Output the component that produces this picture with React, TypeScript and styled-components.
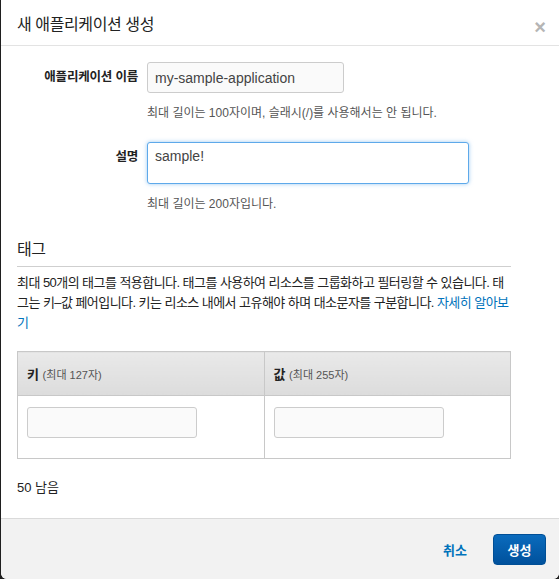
import React from 'react';
import styled, { createGlobalStyle } from 'styled-components';

const GlobalStyle = createGlobalStyle`
  html, body {
    margin: 0;
    padding: 0;
    background: #1f1f1f;
  }
  body {
    font-family: 'Liberation Sans', 'Noto Sans CJK KR', sans-serif;
    font-feature-settings: 'palt';
    color: #222;
  }
  * {
    box-sizing: border-box;
  }
`;

const tags = [
  { key: '키', limit: '(최대 127자)' },
  { key: '값', limit: '(최대 255자)' },
];

export default function App() {
  return (
    <>
      <GlobalStyle />
      <Modal>
        <Header>
          <Title>새 애플리케이션 생성</Title>
          <Close type="button" aria-label="close">
            ×
          </Close>
        </Header>

        <Body>
          <FormRow>
            <Label>애플리케이션 이름</Label>
            <Field>
              <TextInput defaultValue="my-sample-application" width={197} />
              <Help>최대 길이는 100자이며, 슬래시(/)를 사용해서는 안 됩니다.</Help>
            </Field>
          </FormRow>

          <FormRow>
            <Label>설명</Label>
            <Field>
              <TextArea defaultValue="sample!" />
              <Help>최대 길이는 200자입니다.</Help>
            </Field>
          </FormRow>

          <Section>
            <SectionTitle>태그</SectionTitle>
            <Rule />
            <Paragraph>
              최대 50개의 태그를 적용합니다. 태그를 사용하여 리소스를 그룹화하고 필터링할 수
              있습니다. 태그는 키–값 페어입니다. 키는 리소스 내에서 고유해야 하며 대소문자를
              구분합니다. <Link href="#">자세히 알아보기</Link>
            </Paragraph>

            <TagTable>
              <thead>
                <tr>
                  {tags.map(t => (
                    <HeadCell key={t.key}>
                      <strong>{t.key}</strong> <Limit>{t.limit}</Limit>
                    </HeadCell>
                  ))}
                </tr>
              </thead>
              <tbody>
                <tr>
                  {tags.map(t => (
                    <BodyCell key={t.key}>
                      <TextInput width={170} />
                    </BodyCell>
                  ))}
                </tr>
              </tbody>
            </TagTable>

            <Remaining>50 남음</Remaining>
          </Section>
        </Body>

        <Footer>
          <CancelButton type="button">취소</CancelButton>
          <PrimaryButton type="button">생성</PrimaryButton>
        </Footer>
      </Modal>
    </>
  );
}

const Modal = styled.div`
  margin-left: 1px;
  width: 558px;
  height: 579px;
  background: #fff;
  border-radius: 0 0 6px 6px;
  overflow: hidden;
  display: flex;
  flex-direction: column;
`;

const Header = styled.div`
  height: 46px;
  flex-shrink: 0;
  display: flex;
  align-items: center;
  justify-content: space-between;
  padding: 0 13px 0 16px;
  border-bottom: 1px solid #e3e3e3;
`;

const Title = styled.h4`
  margin: 0;
  font-size: 16px;
  letter-spacing: -0.4px;
  font-weight: 400;
  color: #222;
`;

const Close = styled.button`
  border: none;
  background: transparent;
  padding: 0;
  margin-top: 8px;
  font-family: 'Liberation Sans', sans-serif;
  font-size: 20px;
  font-weight: 700;
  line-height: 1;
  color: #b5b5b5;
  cursor: pointer;
`;

const Body = styled.div`
  flex: 1;
  padding: 16px 48px 0 16px;
`;

const FormRow = styled.div`
  display: grid;
  grid-template-columns: 121px 1fr;
  column-gap: 9px;
  align-items: start;
  margin-bottom: 21px;

  & + & {
    margin-bottom: 0;
  }
`;

const Label = styled.label`
  text-align: right;
  font-size: 12.5px;
  letter-spacing: -0.2px;
  font-weight: 700;
  line-height: 30px;
  color: #222;
`;

const Field = styled.div`
  display: flex;
  flex-direction: column;
`;

const TextInput = styled.input<{ width: number }>`
  width: ${p => p.width}px;
  height: 31px;
  padding: 0 7px;
  border: 1px solid #ccc;
  border-radius: 3px;
  background: #fafafa;
  font-family: 'Liberation Sans', 'Noto Sans CJK KR', sans-serif;
  font-size: 14px;
  color: #444;
  outline: none;
`;

const TextArea = styled.textarea`
  width: 322px;
  height: 42px;
  padding: 4px 7px;
  border: 1px solid #5ea9ea;
  border-radius: 3px;
  box-shadow: 0 0 4px rgba(94, 169, 234, 0.6);
  background: #fff;
  resize: none;
  font-family: 'Liberation Sans', 'Noto Sans CJK KR', sans-serif;
  font-size: 14px;
  line-height: 18px;
  color: #444;
  outline: none;
`;

const Help = styled.p`
  margin: 13px 0 0;
  font-size: 12px;
  line-height: 15px;
  color: #555;
`;

const Section = styled.div`
  margin-top: 28px;
`;

const SectionTitle = styled.h3`
  margin: 0;
  font-size: 16px;
  letter-spacing: -0.5px;
  line-height: 20px;
  font-weight: 400;
  color: #222;
`;

const Rule = styled.hr`
  margin: 6px 0 6px;
  border: none;
  border-top: 1px solid #cfcfcf;
`;

const Paragraph = styled.p`
  margin: 0;
  font-size: 13px;
  letter-spacing: -0.55px;
  line-height: 20px;
  color: #222;
`;

const Link = styled.a`
  color: #0073bb;
  text-decoration: none;
`;

const TagTable = styled.table`
  width: 100%;
  margin-top: 18px;
  border-collapse: collapse;
  table-layout: fixed;
`;

const HeadCell = styled.th`
  height: 44px;
  padding: 0 9px;
  text-align: left;
  border: 1px solid #c8c8c8;
  background: linear-gradient(#e9e9e9, #dcdcdc);
  font-size: 13px;
  color: #222;
  font-weight: 400;

  strong {
    font-weight: 700;
  }
`;

const Limit = styled.span`
  font-size: 11px;
  color: #555;
`;

const BodyCell = styled.td`
  height: 63px;
  padding: 0 9px 10px;
  border: 1px solid #c8c8c8;
  vertical-align: middle;
`;

const Remaining = styled.p`
  margin: 21px 0 0;
  font-size: 13px;
  line-height: 16px;
  color: #222;
`;

const Footer = styled.div`
  height: 61px;
  flex-shrink: 0;
  display: flex;
  align-items: center;
  justify-content: flex-end;
  gap: 26px;
  padding: 0 13px 0 16px;
  background: #f2f2f2;
  border-top: 1px solid #dadada;
`;

const CancelButton = styled.button`
  border: none;
  background: transparent;
  padding: 0;
  font-family: 'Liberation Sans', 'Noto Sans CJK KR', sans-serif;
  font-size: 13px;
  font-weight: 700;
  color: #0073bb;
  cursor: pointer;
`;

const PrimaryButton = styled.button`
  width: 53px;
  height: 31px;
  border: 1px solid #004f96;
  border-radius: 4px;
  background: linear-gradient(#0a6bbd, #00519c);
  font-family: 'Liberation Sans', 'Noto Sans CJK KR', sans-serif;
  font-size: 13px;
  font-weight: 700;
  color: #fff;
  cursor: pointer;
`;
